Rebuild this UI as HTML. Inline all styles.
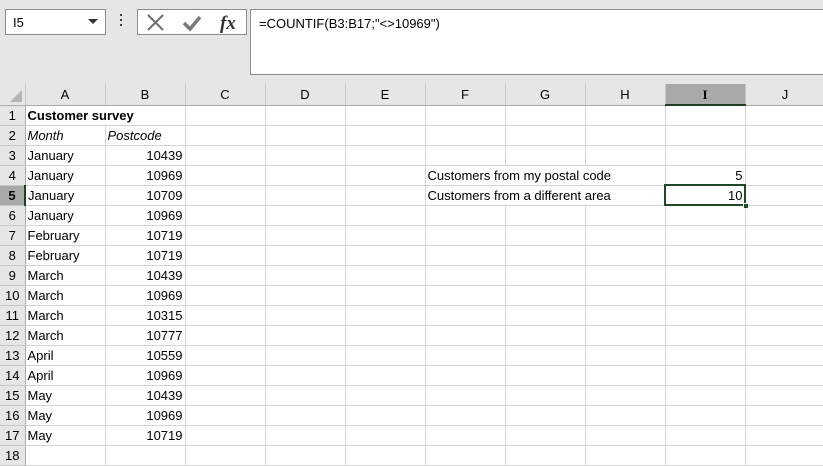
<!DOCTYPE html>
<html><head><style>
*{margin:0;padding:0;box-sizing:border-box}
body{width:823px;height:465px;overflow:hidden;background:#e6e6e6;font-family:"Liberation Sans",Arial,sans-serif;font-size:13px;color:#000;position:relative}
.box{position:absolute;background:#fff;border:1px solid #8c8c8c}
table{position:absolute;left:0;top:84px;width:825px;border-collapse:collapse;table-layout:fixed;background:#fff}
td{height:20px;border-right:1px solid #d4d4d4;border-bottom:1px solid #d4d4d4;padding:0 2px;white-space:nowrap;overflow:visible;line-height:19px}
tr.h td{background:#e6e6e6;text-align:center;height:21px;border-right:1px solid #c8c8c8;border-bottom:1px solid #acacac;font-size:13px}
td.rh{background:#e6e6e6;text-align:center;border-right:1px solid #acacac;border-bottom:1px solid #c8c8c8;padding:0;font-size:13px}
.r{text-align:right}
.b{font-weight:bold}.i{font-style:italic}
</style></head><body>
<div class="box" style="left:5px;top:9px;width:101px;height:26px;padding:5px 0 0 7px">I5
<div style="position:absolute;right:7px;top:9px;width:0;height:0;border-left:5px solid transparent;border-right:5px solid transparent;border-top:5px solid #333"></div></div>
<div style="position:absolute;left:120px;top:14px;width:2px;height:2px;background:#444;box-shadow:0 5px #444,0 10px #444"></div>
<div class="box" style="left:137px;top:9px;width:110px;height:26px">
<svg width="108" height="24" style="position:absolute;left:0;top:0">
<path d="M10 5 L25 20 M25 5 L10 20" stroke="#6e6e6e" stroke-width="2" fill="none"/>
<path d="M46 13 L52 19 L62 7" stroke="#7a7a7a" stroke-width="3.5" fill="none"/>
<text x="82" y="19" font-family="Liberation Serif" font-style="italic" font-weight="bold" font-size="19" fill="#333">fx</text>
</svg></div>
<div class="box" style="left:250px;top:9px;width:580px;height:66px;padding:6px 0 0 8px">=COUNTIF(B3:B17;"&lt;&gt;10969")</div>
<table>
<colgroup><col style="width:25px"><col style="width:80px"><col style="width:80px"><col style="width:80px"><col style="width:80px"><col style="width:80px"><col style="width:80px"><col style="width:80px"><col style="width:80px"><col style="width:80px"><col style="width:80px"></colgroup>
<tr class="h"><td style="background:#e6e6e6;position:relative"><svg width="14" height="14" style="position:absolute;left:8px;top:4px"><path d="M14 2 L14 14 L2 14Z" fill="#b4b4b4"/></svg></td><td>A</td><td>B</td><td>C</td><td>D</td><td>E</td><td>F</td><td>G</td><td>H</td><td style="background:#a9a9a9;border-bottom:2px solid #1e3e25;font-weight:bold;font-family:'Liberation Serif'">I</td><td>J</td></tr>
<tr><td class="rh">1</td><td class="b" style="border-right:none">Customer survey</td><td></td><td></td><td></td><td></td><td></td><td></td><td></td><td></td><td></td></tr>
<tr><td class="rh">2</td><td class="i">Month</td><td class="i">Postcode</td><td></td><td></td><td></td><td></td><td></td><td></td><td></td><td></td></tr>
<tr><td class="rh">3</td><td>January</td><td class="r">10439</td><td></td><td></td><td></td><td></td><td></td><td></td><td></td><td></td></tr>
<tr><td class="rh">4</td><td>January</td><td class="r">10969</td><td></td><td></td><td></td><td style="border-right:none">Customers from my postal code</td><td style="border-right:none"></td><td></td><td class="r">5</td><td></td></tr>
<tr><td class="rh" style="background:#a9a9a9;font-weight:bold;border-right:2px solid #1e3e25">5</td><td>January</td><td class="r">10709</td><td></td><td></td><td></td><td style="border-right:none">Customers from a different area</td><td style="border-right:none"></td><td></td><td class="r" style="outline:2px solid #1e4a2a;outline-offset:-1px;position:relative">10<div style="position:absolute;right:-4px;bottom:-4px;width:6px;height:6px;background:#1e4a2a;border:1px solid #fff"></div></td><td></td></tr>
<tr><td class="rh">6</td><td>January</td><td class="r">10969</td><td></td><td></td><td></td><td></td><td></td><td></td><td></td><td></td></tr>
<tr><td class="rh">7</td><td>February</td><td class="r">10719</td><td></td><td></td><td></td><td></td><td></td><td></td><td></td><td></td></tr>
<tr><td class="rh">8</td><td>February</td><td class="r">10719</td><td></td><td></td><td></td><td></td><td></td><td></td><td></td><td></td></tr>
<tr><td class="rh">9</td><td>March</td><td class="r">10439</td><td></td><td></td><td></td><td></td><td></td><td></td><td></td><td></td></tr>
<tr><td class="rh">10</td><td>March</td><td class="r">10969</td><td></td><td></td><td></td><td></td><td></td><td></td><td></td><td></td></tr>
<tr><td class="rh">11</td><td>March</td><td class="r">10315</td><td></td><td></td><td></td><td></td><td></td><td></td><td></td><td></td></tr>
<tr><td class="rh">12</td><td>March</td><td class="r">10777</td><td></td><td></td><td></td><td></td><td></td><td></td><td></td><td></td></tr>
<tr><td class="rh">13</td><td>April</td><td class="r">10559</td><td></td><td></td><td></td><td></td><td></td><td></td><td></td><td></td></tr>
<tr><td class="rh">14</td><td>April</td><td class="r">10969</td><td></td><td></td><td></td><td></td><td></td><td></td><td></td><td></td></tr>
<tr><td class="rh">15</td><td>May</td><td class="r">10439</td><td></td><td></td><td></td><td></td><td></td><td></td><td></td><td></td></tr>
<tr><td class="rh">16</td><td>May</td><td class="r">10969</td><td></td><td></td><td></td><td></td><td></td><td></td><td></td><td></td></tr>
<tr><td class="rh">17</td><td>May</td><td class="r">10719</td><td></td><td></td><td></td><td></td><td></td><td></td><td></td><td></td></tr>
<tr><td class="rh">18</td><td></td><td></td><td></td><td></td><td></td><td></td><td></td><td></td><td></td><td></td></tr>
</table>
</body></html>
